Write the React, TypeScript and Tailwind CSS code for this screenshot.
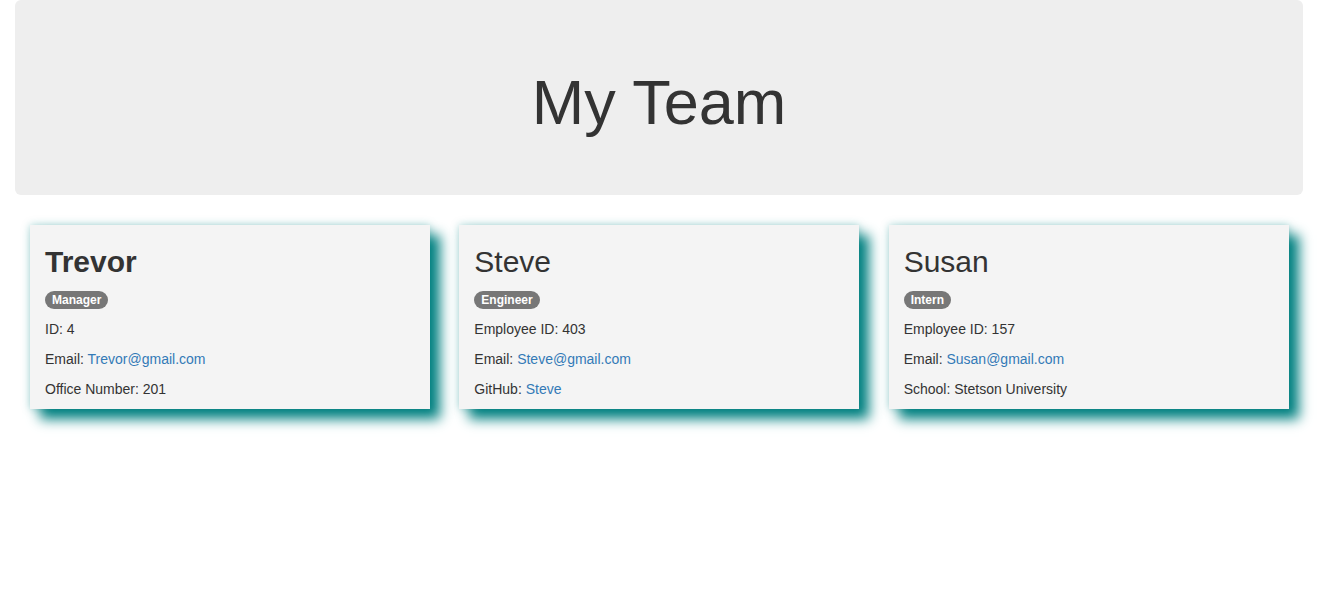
import React from "react";

type Member = {
  name: string;
  role: string;
  bold?: boolean;
  idLabel: string;
  id: string;
  email: string;
  extraLabel: string;
  extra: string;
  extraLink?: boolean;
};

const team: Member[] = [
  {
    name: "Trevor",
    role: "Manager",
    bold: true,
    idLabel: "ID",
    id: "4",
    email: "Trevor@gmail.com",
    extraLabel: "Office Number",
    extra: "201",
  },
  {
    name: "Steve",
    role: "Engineer",
    idLabel: "Employee ID",
    id: "403",
    email: "Steve@gmail.com",
    extraLabel: "GitHub",
    extra: "Steve",
    extraLink: true,
  },
  {
    name: "Susan",
    role: "Intern",
    idLabel: "Employee ID",
    id: "157",
    email: "Susan@gmail.com",
    extraLabel: "School",
    extra: "Stetson University",
  },
];

function MemberCard({ member }: { member: Member }) {
  return (
    <div className="flow-root w-[400px] bg-[#f4f4f4] px-[15px] shadow-[10px_10px_12px_#008080,0_0_8px_rgba(0,128,128,0.35)]">
      <h2
        className={`mt-5 mb-[10px] text-[30px] leading-[1.1] ${
          member.bold ? "font-bold" : "font-normal"
        }`}
      >
        {member.name}
      </h2>
      <div className="mb-[10px] h-[21px] leading-5">
        <span className="inline-block rounded-[10px] bg-[#777] px-[7px] py-[3px] align-middle text-[12px] leading-none font-bold text-white">
          {member.role}
        </span>
      </div>
      <p className="mb-[10px] leading-5">
        {member.idLabel}: {member.id}
      </p>
      <p className="mb-[10px] leading-5">
        Email: <a className="text-[#337ab7]">{member.email}</a>
      </p>
      <p className="mb-[10px] leading-5">
        {member.extraLabel}:{" "}
        {member.extraLink ? (
          <a className="text-[#337ab7]">{member.extra}</a>
        ) : (
          member.extra
        )}
      </p>
    </div>
  );
}

export default function App() {
  return (
    <div className="min-h-[599px] bg-white px-[15px] font-['Liberation_Sans',Arial,sans-serif] text-[14px] text-[#333]">
      {/* Header */}
      <div className="mb-[30px] flow-root rounded-[6px] bg-[#eee] py-12 text-center">
        <h1 className="mt-5 mb-[10px] text-[63px] leading-[1.1] font-normal">
          My Team
        </h1>
      </div>

      {/* Cards */}
      <div className="grid grid-cols-3">
        {team.map((m) => (
          <div key={m.name} className="pl-[15px]">
            <MemberCard member={m} />
          </div>
        ))}
      </div>
    </div>
  );
}
